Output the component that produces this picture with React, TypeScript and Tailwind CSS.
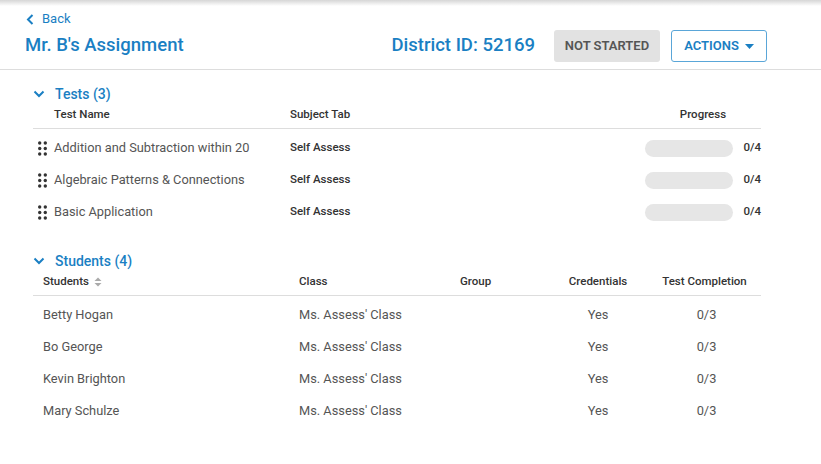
import React from 'react';

const BLUE = 'text-[#1a7fc3]';

const Chevron = () => (
  <svg width="12" height="8" viewBox="0 0 12 8" className="mr-[10px]">
    <path d="M1.5 1.5 L6 6 L10.5 1.5" fill="none" stroke="#1a7fc3" strokeWidth="2" />
  </svg>
);

const DragDots = () => (
  <svg width="9" height="15" viewBox="0 0 9 15" className="mr-[7px]">
    {[1.7, 7.3].map((x) =>
      [2, 7.5, 13].map((y) => <circle key={`${x}-${y}`} cx={x} cy={y} r="1.7" fill="#333" />)
    )}
  </svg>
);

const SortIcon = () => (
  <svg width="8" height="10" viewBox="0 0 8 10" className="ml-[5px]">
    <path d="M4 0.5 L7.5 4 L0.5 4 Z" fill="#aaa" />
    <path d="M4 9.5 L7.5 6 L0.5 6 Z" fill="#aaa" />
  </svg>
);

const App = () => {
  const tests = [
    'Addition and Subtraction within 20',
    'Algebraic Patterns & Connections',
    'Basic Application',
  ];
  const students = ['Betty Hogan', 'Bo George', 'Kevin Brighton', 'Mary Schulze'];

  return (
    <div className="w-[821px] h-[464px] bg-white relative overflow-hidden" style={{ fontFamily: 'Roboto, "Noto Sans", sans-serif' }}>
      <div className="absolute top-0 left-0 right-0 h-[6px] bg-gradient-to-b from-[#d6d6d6] to-white" />

      {/* header */}
      <div className="pt-[11px] pl-[25px] pr-[54px] pb-[7px] border-b border-[#dddddd]">
        <div className={`flex items-center h-4 text-[13px] ${BLUE}`}>
          <svg width="8" height="11" viewBox="0 0 8 11" className="mr-[8px] ml-[1px]">
            <path d="M6.5 1 L2 5.5 L6.5 10" fill="none" stroke="#1a7fc3" strokeWidth="2" />
          </svg>
          Back
        </div>
        <div className="flex items-center h-8 mt-[3px]">
          <div className={`text-[18.5px] font-medium ${BLUE}`}>Mr. B's Assignment</div>
          <div className={`ml-auto text-[18.5px] font-medium ${BLUE}`}>District ID: 52169</div>
          <div className="ml-[19px] w-[106px] h-8 rounded-[3px] bg-[#e2e2e2] text-[#555] text-[13px] font-semibold flex items-center justify-center">
            NOT STARTED
          </div>
          <div className={`ml-[11px] w-[96px] h-8 rounded-[3px] border border-[#5aa6d8] ${BLUE} text-[13px] font-semibold flex items-center justify-center`}>
            ACTIONS
            <svg width="9" height="5" viewBox="0 0 9 5" className="ml-[6px]">
              <path d="M0 0 L9 0 L4.5 5 Z" fill="#1a7fc3" />
            </svg>
          </div>
        </div>
      </div>

      <div className="ml-[33px] w-[728px] pt-[14px]">
        {/* tests */}
        <div className={`flex items-center h-5 text-[14px] font-medium ${BLUE}`}>
          <Chevron />
          Tests (3)
        </div>
        <div className="flex items-center h-[21px] mb-[3px] text-[11.5px] font-medium text-[#333] border-b border-[#dddddd] box-content pb-[3px]">
          <div className="w-[257px] pl-[21px]">Test Name</div>
          <div className="flex-1">Subject Tab</div>
          <div className="w-[116px] text-center">Progress</div>
        </div>
        {tests.map((t) => (
          <div key={t} className="flex items-center h-8">
            <div className="w-[257px] pl-[5px] flex items-center text-[12.8px] text-[#555]">
              <DragDots />
              {t}
            </div>
            <div className="flex-1 text-[11.5px] font-medium text-[#333]">Self Assess</div>
            <div className="w-[116px] flex items-center">
              <div className="w-[91px] h-[17px] rounded-full bg-[#e6e6e6]" />
              <div className="ml-[10px] text-[11.5px] font-medium text-[#333]">0/4</div>
            </div>
          </div>
        ))}

        {/* students */}
        <div className={`flex items-center h-5 mt-[23px] text-[14px] font-medium ${BLUE}`}>
          <Chevron />
          Students (4)
        </div>
        <div className="grid grid-cols-[266px_161px_80px_116px_1fr] items-center h-[21px] mb-[3px] text-[11.5px] font-medium text-[#333] border-b border-[#dddddd] box-content pb-[3px]">
          <div className="pl-[10px] flex items-center">
            Students
            <SortIcon />
          </div>
          <div>Class</div>
          <div>Group</div>
          <div className="text-center">Credentials</div>
          <div className="text-center pr-[8px]">Test Completion</div>
        </div>
        {students.map((s) => (
          <div key={s} className="grid grid-cols-[266px_161px_80px_116px_1fr] items-center h-8 text-[12.8px] text-[#555]">
            <div className="pl-[10px]">{s}</div>
            <div>Ms. Assess' Class</div>
            <div />
            <div className="text-center">Yes</div>
            <div className="text-center pr-[4px]">0/3</div>
          </div>
        ))}
      </div>
    </div>
  );
};

export default App;
